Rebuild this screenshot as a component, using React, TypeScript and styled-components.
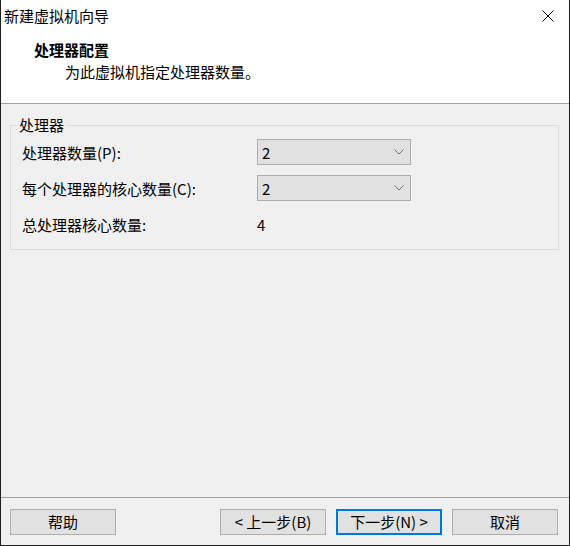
import React from "react";
import styled, { createGlobalStyle, css } from "styled-components";

const GlobalStyle = createGlobalStyle`
  html, body {
    margin: 0;
    padding: 0;
    background: #f0f0f0;
  }
  * { box-sizing: border-box; }
  body {
    font-family: "Noto Sans CJK SC", "Noto Sans", sans-serif;
    font-size: 15px;
    color: #000;
  }
`;

const Window = styled.div`
  width: 570px;
  height: 546px;
  display: flex;
  flex-direction: column;
  border: 1px solid #1f1f1f;
  border-top: none;
  background: #f0f0f0;
  overflow: hidden;
`;

const Header = styled.div`
  background: #fff;
  height: 104px;
  border-bottom: 1px solid #a0a0a0;
  display: flex;
  flex-direction: column;
`;

const TitleBar = styled.div`
  height: 32px;
  display: flex;
  align-items: center;
  justify-content: space-between;
  padding-left: 3px;
`;

const TitleText = styled.span`
  font-size: 15px;
  line-height: 20px;
`;

const CloseButton = styled.div`
  width: 42px;
  height: 32px;
  display: flex;
  align-items: center;
  justify-content: center;
`;

const HeaderTexts = styled.div`
  padding-left: 33px;
  padding-top: 8px;
  display: flex;
  flex-direction: column;
  gap: 2px;
`;

const Heading = styled.div`
  font-weight: 700;
  font-size: 15px;
  line-height: 20px;
`;

const SubHeading = styled.div`
  font-size: 15px;
  line-height: 20px;
  padding-left: 31px;
`;

const Body = styled.div`
  flex: 1;
  padding: 11px 10px 0 9px;
`;

const Group = styled.fieldset`
  margin: 0;
  padding: 0;
  border: 1px solid #dcdcdc;
  min-width: 0;
`;

const Legend = styled.legend`
  margin-left: 6px;
  padding: 0 2px;
  font-size: 15px;
  line-height: 20px;
`;

const Rows = styled.div`
  display: flex;
  flex-direction: column;
  gap: 10px;
  padding: 4px 0 12px 11px;
`;

const Row = styled.div`
  display: grid;
  grid-template-columns: 235px 154px;
  align-items: center;
  height: 26px;
  font-size: 15px;
`;

const Combo = styled.div`
  height: 26px;
  border: 1px solid #adadad;
  background: #e1e1e1;
  display: flex;
  align-items: center;
  justify-content: space-between;
  padding: 0 6px 0 4px;
`;

const Footer = styled.div`
  border-top: 1px solid #a0a0a0;
  padding: 11px 11px 10px 9px;
  display: flex;
  align-items: center;
`;

const Spacer = styled.div`
  flex: 1;
`;

const ButtonGroup = styled.div`
  display: flex;
  gap: 10px;
`;

const Button = styled.div<{ $primary?: boolean }>`
  width: 106px;
  height: 26px;
  border: 1px solid #adadad;
  background: #e1e1e1;
  display: flex;
  align-items: center;
  justify-content: center;
  font-size: 15px;
  line-height: 20px;
  ${(p) =>
    p.$primary &&
    css`
      border: 2px solid #0078d7;
    `}
`;

const Chevron = () => (
  <svg width="10" height="6" viewBox="0 0 10 6">
    <path d="M0.5 0.5 L5 5 L9.5 0.5" fill="none" stroke="#707070" strokeWidth="1" />
  </svg>
);

const CloseIcon = () => (
  <svg width="12" height="12" viewBox="0 0 12 12">
    <path d="M0.5 0.5 L11.5 11.5 M11.5 0.5 L0.5 11.5" stroke="#000" strokeWidth="1" />
  </svg>
);

export default function App() {
  return (
    <>
      <GlobalStyle />
      <Window>
        <Header>
          <TitleBar>
            <TitleText>新建虚拟机向导</TitleText>
            <CloseButton>
              <CloseIcon />
            </CloseButton>
          </TitleBar>
          <HeaderTexts>
            <Heading>处理器配置</Heading>
            <SubHeading>为此虚拟机指定处理器数量。</SubHeading>
          </HeaderTexts>
        </Header>
        <Body>
          <Group>
            <Legend>处理器</Legend>
            <Rows>
              <Row>
                <span>处理器数量(P):</span>
                <Combo>
                  <span>2</span>
                  <Chevron />
                </Combo>
              </Row>
              <Row>
                <span>每个处理器的核心数量(C):</span>
                <Combo>
                  <span>2</span>
                  <Chevron />
                </Combo>
              </Row>
              <Row>
                <span>总处理器核心数量:</span>
                <span>4</span>
              </Row>
            </Rows>
          </Group>
        </Body>
        <Footer>
          <Button>帮助</Button>
          <Spacer />
          <ButtonGroup>
            <Button>&lt; 上一步(B)</Button>
            <Button $primary>下一步(N) &gt;</Button>
            <Button>取消</Button>
          </ButtonGroup>
        </Footer>
      </Window>
    </>
  );
}
